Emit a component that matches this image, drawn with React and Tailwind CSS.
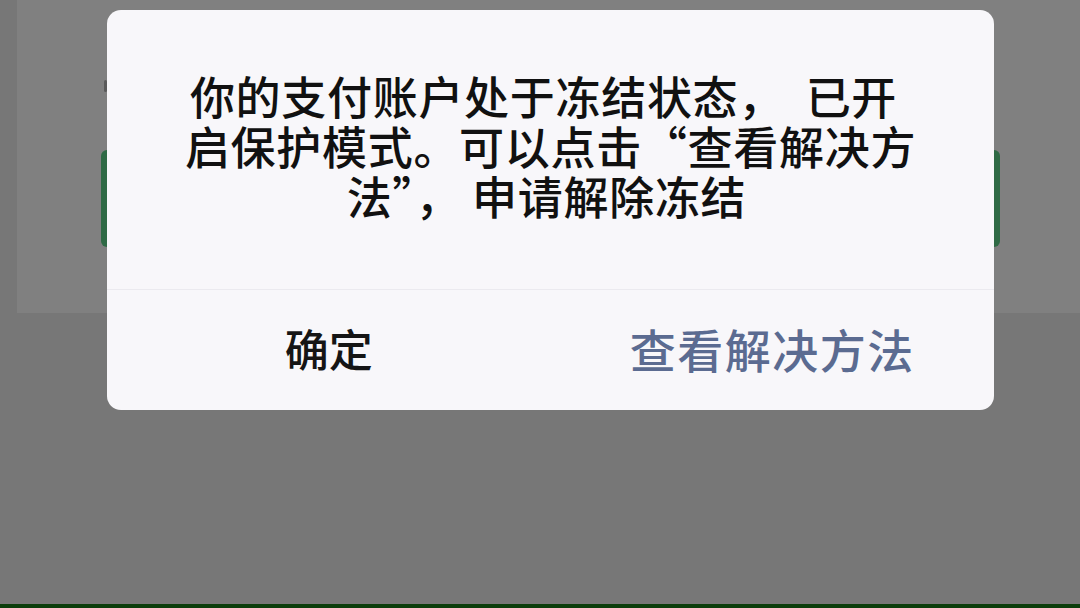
export default function App() {
  const font = { fontFamily: '"Noto Sans CJK SC", "Noto Sans", sans-serif' };

  return (
    <div className="relative w-[1080px] h-[608px] overflow-hidden bg-[#777777]" style={font}>
      {/* dimmed page behind the dialog */}
      <div className="flex flex-col h-full">
        <div className="ml-[17px] h-[313px] bg-[#808080] flex flex-col">
          <div className="ml-[87px] mt-[80px] w-[3px] h-[12px] bg-[#5a5a5a] rounded-sm" />
          <div className="ml-[84px] mt-[58px] w-[899px] h-[97px] rounded-[6px] bg-[#2f6a45]" />
        </div>
        <div className="flex-1" />
        <div className="h-[4px] bg-[#0b3d0b]" />
      </div>

      {/* dialog */}
      <div className="absolute left-[107px] top-[10px] w-[887px] h-[400px] rounded-[14px] bg-[#f8f7fa] flex flex-col">
        <div className="h-[279px] pt-[61px] flex flex-col items-center text-[45px] leading-[50px] tracking-[0.7px] font-medium text-[#111111]">
          <div className="pr-[14px]">你的支付账户处于冻结状态，&nbsp;&nbsp;已开</div>
          <div>启保护模式。可以点击“查看解决方</div>
          <div className="pr-[8px]">法”，&nbsp;申请解除冻结</div>
        </div>
        <div className="flex-1 border-t border-[#ebeaef] flex">
          <div className="flex-1 flex items-center justify-center pb-[4px] text-[44px] font-medium text-[#151515]">
            确定
          </div>
          <div className="flex-1 flex items-center justify-center pb-[4px] text-[46px] tracking-[1.5px] font-medium text-[#5b6b91]">
            查看解决方法
          </div>
        </div>
      </div>
    </div>
  );
}
